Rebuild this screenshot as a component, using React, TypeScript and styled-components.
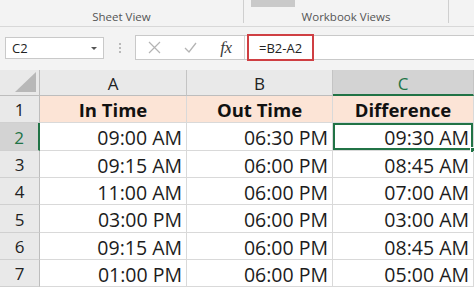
import React from "react";
import styled, { createGlobalStyle, css } from "styled-components";

const GlobalStyle = createGlobalStyle`
  html, body {
    margin: 0;
    padding: 0;
    background: #ffffff;
    overflow: hidden;
  }
  * {
    box-sizing: border-box;
  }
`;

const GREEN = "#217346";

const Page = styled.div`
  width: 474px;
  height: 287px;
  overflow: hidden;
  font-family: "Open Sans", "Noto Sans", sans-serif;
  background: #f3f3f3;
`;

const Ribbon = styled.div`
  height: 27px;
  display: flex;
  align-items: flex-start;
  background: #f3f3f3;
  border-bottom: 1px solid #d8d8d8;
`;

const Group = styled.div<{ $w: number }>`
  width: ${(p) => p.$w}px;
  height: 23px;
  border-right: 1px solid #cfcfcf;
  display: flex;
  flex-direction: column;
  justify-content: space-between;
`;

const Thumb = styled.div`
  width: 44px;
  height: 7px;
  margin-left: 7px;
  background: #c9c9c9;
`;

const GroupLabel = styled.div`
  font-size: 11.5px;
  line-height: 14px;
  color: #555555;
  text-align: center;
  margin-top: auto;
  margin-bottom: -1px;
`;

const FormulaArea = styled.div`
  height: 43px;
  display: flex;
  align-items: flex-start;
  padding: 8px 0 0 5px;
`;

const NameBox = styled.div`
  width: 99px;
  height: 22px;
  margin-top: 2px;
  background: #ffffff;
  border: 1px solid #c9c9c9;
  display: flex;
  align-items: center;
  justify-content: space-between;
  padding: 0 6px 0 6px;
  font-size: 13px;
  color: #222222;
`;

const Caret = styled.span`
  width: 0;
  height: 0;
  border-left: 3px solid transparent;
  border-right: 3px solid transparent;
  border-top: 3px solid #555555;
`;

const Grip = styled.div`
  width: 31px;
  height: 25px;
  display: flex;
  align-items: center;
  justify-content: center;
`;

const FormulaBox = styled.div`
  flex: 1;
  height: 25px;
  background: #ffffff;
  border: 1px solid #c9c9c9;
  border-right: none;
  display: flex;
  align-items: center;
`;

const IconSlot = styled.div`
  width: 36px;
  height: 100%;
  display: flex;
  align-items: center;
  justify-content: center;
`;

const Fx = styled.span`
  font-family: "Liberation Serif", "DejaVu Serif", serif;
  font-style: italic;
  font-size: 17px;
  color: #3a3a3a;
  letter-spacing: -0.5px;
`;

const Divider = styled.div`
  width: 1px;
  height: 100%;
  background: #d4d4d4;
`;

const Formula = styled.div`
  height: 27px;
  width: 67px;
  margin: -1px 0 -1px 2px;
  border: 2px solid #cf3f43;
  display: flex;
  align-items: center;
  padding-left: 10px;
  font-size: 13px;
  color: #222222;
`;

const Sheet = styled.div`
  display: grid;
  grid-template-columns: 40px 147px 146px 141px;
  grid-template-rows: 26px 27px 28px 27px 27px 28px 27px 27px;
  background: #ffffff;
`;

const Corner = styled.div`
  background: #e9e9e9;
  border-right: 1px solid #bdbdbd;
  border-bottom: 1px solid #bdbdbd;
  display: flex;
  align-items: flex-end;
  justify-content: flex-end;
  padding: 0 3px 3px 0;
`;

const Triangle = styled.div`
  width: 21px;
  height: 20px;
  background: #b8b8b8;
  clip-path: polygon(100% 0, 100% 100%, 0 100%);
`;

const ColHead = styled.div<{ $active?: boolean }>`
  background: ${(p) => (p.$active ? "#d3d3d3" : "#e9e9e9")};
  color: ${(p) => (p.$active ? GREEN : "#222222")};
  border-right: 1px solid #c4c4c4;
  border-bottom: ${(p) => (p.$active ? `2px solid ${GREEN}` : "1px solid #bdbdbd")};
  display: flex;
  align-items: center;
  justify-content: center;
  font-size: 17px;
  padding-top: 2px;
`;

const RowHead = styled.div<{ $active?: boolean }>`
  background: ${(p) => (p.$active ? "#d3d3d3" : "#e9e9e9")};
  color: ${(p) => (p.$active ? GREEN : "#222222")};
  border-right: ${(p) => (p.$active ? `2px solid ${GREEN}` : "1px solid #bdbdbd")};
  border-bottom: 1px solid #d0d0d0;
  display: flex;
  align-items: center;
  justify-content: center;
  font-size: 17px;
  padding-top: 1px;
`;

const Cell = styled.div<{ $title?: boolean; $selected?: boolean }>`
  position: relative;
  border-right: 1px solid #d9d9d9;
  border-bottom: 1px solid #d9d9d9;
  display: flex;
  align-items: center;
  justify-content: flex-end;
  padding: 2px 4px 0 0;
  font-size: 19.5px;
  color: #1c1c1c;
  white-space: nowrap;
  ${(p) =>
    p.$title &&
    css`
      background: #fce4d6;
      justify-content: center;
      padding: 1px 0 0 0;
      font-weight: 700;
      font-size: 18.5px;
      color: #111111;
    `}
  ${(p) =>
    p.$selected &&
    css`
      box-shadow: inset 0 0 0 2px ${GREEN};
    `}
`;

const FillHandle = styled.span`
  position: absolute;
  right: -3px;
  bottom: -3px;
  width: 6px;
  height: 6px;
  background: ${GREEN};
  border: 1px solid #ffffff;
`;

const titles = ["In Time", "Out Time", "Difference"];

const rows = [
  ["09:00 AM", "06:30 PM", "09:30 AM"],
  ["09:15 AM", "06:00 PM", "08:45 AM"],
  ["11:00 AM", "06:00 PM", "07:00 AM"],
  ["03:00 PM", "06:00 PM", "03:00 AM"],
  ["09:15 AM", "06:00 PM", "08:45 AM"],
  ["01:00 PM", "06:00 PM", "05:00 AM"],
];

function App() {
  return (
    <Page>
      <GlobalStyle />
      <Ribbon>
        <Group $w={244}>
          <GroupLabel>Sheet View</GroupLabel>
        </Group>
        <Group $w={205}>
          <Thumb />
          <GroupLabel>Workbook Views</GroupLabel>
        </Group>
      </Ribbon>

      <FormulaArea>
        <NameBox>
          <span>C2</span>
          <Caret />
        </NameBox>
        <Grip>
          <svg width="4" height="12" viewBox="0 0 4 12">
            <circle cx="2" cy="2" r="1" fill="#a6a6a6" />
            <circle cx="2" cy="6" r="1" fill="#a6a6a6" />
            <circle cx="2" cy="10" r="1" fill="#a6a6a6" />
          </svg>
        </Grip>
        <FormulaBox>
          <IconSlot>
            <svg width="13" height="13" viewBox="0 0 13 13">
              <path d="M1 1 L12 12 M12 1 L1 12" stroke="#b4b4b4" strokeWidth="1.2" fill="none" />
            </svg>
          </IconSlot>
          <IconSlot>
            <svg width="13" height="11" viewBox="0 0 13 11">
              <path d="M1 6 L5 10 L12 1" stroke="#b4b4b4" strokeWidth="1.3" fill="none" />
            </svg>
          </IconSlot>
          <IconSlot>
            <Fx>fx</Fx>
          </IconSlot>
          <Divider />
          <Formula>=B2-A2</Formula>
        </FormulaBox>
      </FormulaArea>

      <Sheet>
        <Corner>
          <Triangle />
        </Corner>
        <ColHead>A</ColHead>
        <ColHead>B</ColHead>
        <ColHead $active>C</ColHead>

        <RowHead>1</RowHead>
        {titles.map((t) => (
          <Cell key={t} $title>
            {t}
          </Cell>
        ))}

        {rows.map((r, i) => (
          <React.Fragment key={i}>
            <RowHead $active={i === 0}>{i + 2}</RowHead>
            {r.map((v, j) => (
              <Cell key={j} $selected={i === 0 && j === 2}>
                {v}
                {i === 0 && j === 2 && <FillHandle />}
              </Cell>
            ))}
          </React.Fragment>
        ))}
      </Sheet>
    </Page>
  );
}

export default App;
